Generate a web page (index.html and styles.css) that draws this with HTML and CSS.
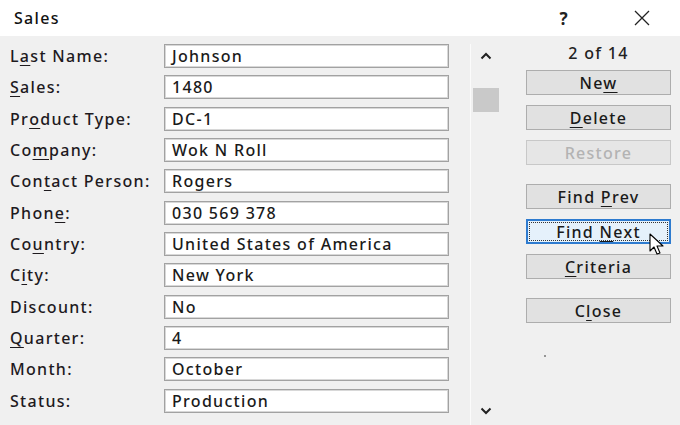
FILE: index.html
```html
<!DOCTYPE html>
<html>
<head>
<meta charset="utf-8">
<link rel="stylesheet" href="styles.css">
</head>
<body>
<div class="dialog">
  <div class="titlebar">
    <span class="title">Sales</span>
    <span class="help">?</span>
    <svg class="close-x" width="18" height="18" viewBox="0 0 18 18"><path d="M2 2 L16 16 M16 2 L2 16" stroke="#222" stroke-width="1.3" fill="none"/></svg>
  </div>
  <div class="main">
    <div class="form">
      <label>L<u>a</u>st Name:</label><div class="field">Johnson</div>
      <label><u>S</u>ales:</label><div class="field">1480</div>
      <label>Pr<u>o</u>duct Type:</label><div class="field">DC-1</div>
      <label>Co<u>m</u>pany:</label><div class="field">Wok N Roll</div>
      <label>Con<u>t</u>act Person:</label><div class="field">Rogers</div>
      <label>Phon<u>e</u>:</label><div class="field">030 569 378</div>
      <label>Co<u>u</u>ntry:</label><div class="field">United States of America</div>
      <label>C<u>i</u>ty:</label><div class="field">New York</div>
      <label>Discount:</label><div class="field">No</div>
      <label><u>Q</u>uarter:</label><div class="field">4</div>
      <label>Month:</label><div class="field">October</div>
      <label>Status:</label><div class="field">Production</div>
    </div>
    <div class="scrollbar">
      <svg class="arrow" width="12" height="8" viewBox="0 0 12 8"><path d="M1.5 6.5 L6 2 L10.5 6.5" stroke="#222" stroke-width="2" fill="none"/></svg>
      <div class="thumb"></div>
      <div class="spacer"></div>
      <svg class="arrow" width="12" height="8" viewBox="0 0 12 8"><path d="M1.5 1.5 L6 6 L10.5 1.5" stroke="#222" stroke-width="2" fill="none"/></svg>
    </div>
    <div class="buttons">
      <div class="counter">2 of 14</div>
      <button class="btn"><span>Ne<u>w</u></span></button>
      <button class="btn"><span><u>D</u>elete</span></button>
      <button class="btn disabled"><span>Restore</span></button>
      <button class="btn gap"><span>Find <u>P</u>rev</span></button>
      <button class="btn focus"><span class="focusring"><span>Find <u>N</u>ext</span></span></button>
      <button class="btn"><span><u>C</u>riteria</span></button>
      <button class="btn gap"><span>C<u>l</u>ose</span></button>
      <div class="dot"></div>
      <svg class="cursor" width="16" height="24" viewBox="0 0 16 24"><path d="M1 1 L1 18 L5 14 L8 21 L11 20 L8 13 L14 13 Z" fill="#fff" stroke="#000" stroke-width="1.1" stroke-linejoin="round"/></svg>
    </div>
  </div>
</div>
</body>
</html>
```
FILE: styles.css
```css
* { box-sizing: border-box; }
html, body { margin: 0; padding: 0; }
body {
  width: 680px;
  height: 425px;
  overflow: hidden;
  font-family: "Noto Sans", "Open Sans", sans-serif;
  font-size: 16px;
  font-weight: 500;
  letter-spacing: 1.3px;
  color: #1e1a1e;
  background: #f0f0f0;
}
.dialog { width: 680px; height: 425px; display: flex; flex-direction: column; }
.titlebar {
  height: 36px;
  background: #fff;
  display: flex;
  align-items: center;
  padding-left: 14px;
  flex: none;
}
.title { color: #111; }
.help { margin-left: auto; margin-right: 64px; font-size: 17px; font-weight: 700; color: #222; }
.close-x { margin-right: 29px; }
.main { flex: 1; display: flex; padding-top: 8px; position: relative; }
.form {
  display: grid;
  grid-template-columns: 154px 285px;
  grid-auto-rows: 24px;
  row-gap: 7.33px;
  padding-left: 10px;
  align-content: start;
}
label { display: flex; align-items: center; white-space: nowrap; }
u { text-decoration-thickness: 1px; text-underline-offset: 3px; }
.field {
  background: #fff;
  border: 1px solid #a2a2a2;
  box-shadow: inset 0 0 0 1px #d8d8d8;
  display: flex;
  align-items: center;
  padding-left: 7px;
  color: #1a1a1a;
  white-space: nowrap;
}
.scrollbar {
  margin-left: 21px;
  width: 31px;
  border-left: 1px solid #fbfbfb;
  display: flex;
  flex-direction: column;
  align-items: center;
  padding-top: 8px;
  padding-bottom: 10px;
}
.thumb { width: 26px; height: 24px; background: #c9c9c9; margin-top: 28px; }
.spacer { flex: 1; }
.buttons {
  margin-left: 25px;
  width: 145px;
  display: flex;
  flex-direction: column;
  position: relative;
}
.counter { text-align: center; height: 18px; line-height: 18px; margin-bottom: 8px; color: #222; }
.btn {
  font-family: inherit;
  font-size: 16px;
  font-weight: 500;
  letter-spacing: 1.3px;
  color: #1a1a1a;
  height: 25px;
  background: #e1e1e1;
  border: 1px solid #adadad;
  margin: 0 0 10px 0;
  padding: 0;
  display: flex;
  align-items: center;
  justify-content: center;
  white-space: nowrap;
}
.btn.disabled { color: #b3b3b3; background: #e6e6e6; border-color: #c8c8c8; }
.btn.gap { margin-top: 9px; }
.btn.focus { background: #e5f1fb; border: 2px solid #2e7bcf; padding: 1px; }
.focusring {
  width: 100%; height: 100%;
  border: 1px dotted #333;
  display: flex; align-items: center; justify-content: center;
}
.dot { position: absolute; left: 18px; top: 311px; width: 2px; height: 2px; background: #777; border-radius: 1px; }
.cursor { position: absolute; left: 123px; top: 189px; }
```
